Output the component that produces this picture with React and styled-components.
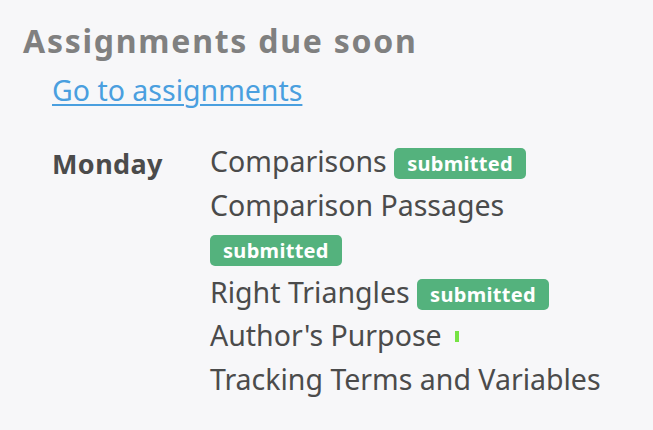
import React from 'react';
import styled, { createGlobalStyle } from "styled-components";

const GlobalStyle = createGlobalStyle`
  html, body {
    margin: 0;
    padding: 0;
    background: #f7f7f9;
  }
  body {
    font-family: "Noto Sans", "Open Sans", sans-serif;
  }
`;

const Container = styled.div`
  width: 653px;
  height: 430px;
  box-sizing: border-box;
  padding: 21px 0 0 23px;
  background: #f7f7f9;
  overflow: hidden;
`;

const Title = styled.h2`
  margin: 0;
  font-size: 32px;
  font-weight: 700;
  letter-spacing: 1.75px;
  color: #808080;
  line-height: 40px;
`;

const Link = styled.a`
  display: block;
  width: fit-content;
  margin: 11px 0 0 29px;
  font-size: 28.5px;
  line-height: 36px;
  color: #4a9fdf;
  text-decoration: underline;
  text-underline-offset: 3px;
  text-decoration-thickness: 2px;
`;

const Day = styled.div`
  display: grid;
  grid-template-columns: 158px 420px;
  margin: 32px 0 0 29px;
`;

const DayName = styled.div`
  padding-top: 2px;
  font-size: 27px;
  font-weight: 700;
  letter-spacing: 0.4px;
  color: #4b4b4b;
  line-height: 43.5px;
`;

const List = styled.div`
  font-size: 28.5px;
  line-height: 43.5px;
  color: #4b4b4b;
`;

const Item = styled.div``;

const Badge = styled.span`
  display: inline-block;
  padding: 0 13px;
  height: 31px;
  line-height: 31px;
  border-radius: 5px;
  background: #54b27d;
  color: #fff;
  font-size: 20px;
  font-weight: 700;
  letter-spacing: 0.3px;
  vertical-align: 1px;
`;

const Progress = styled.span`
  display: inline-block;
  width: 4px;
  height: 11px;
  margin-left: 6px;
  background: #76e344;
  vertical-align: 4px;
`;

const assignments = [
  { name: "Comparisons", submitted: true },
  { name: "Comparison Passages", submitted: true },
  { name: "Right Triangles", submitted: true },
  { name: "Author's Purpose", progress: true },
  { name: "Tracking Terms and Variables" },
];

const App = () => {
  return (
    <Container>
      <GlobalStyle />
      <Title>Assignments due soon</Title>
      <Link href="#">Go to assignments</Link>
      <Day>
        <DayName>Monday</DayName>
        <List>
          {assignments.map((a) => (
            <Item key={a.name}>
              {a.name}{" "}
              {a.submitted && <Badge>submitted</Badge>}
              {a.progress && <Progress />}
            </Item>
          ))}
        </List>
      </Day>
    </Container>
  );
};

export default App;
